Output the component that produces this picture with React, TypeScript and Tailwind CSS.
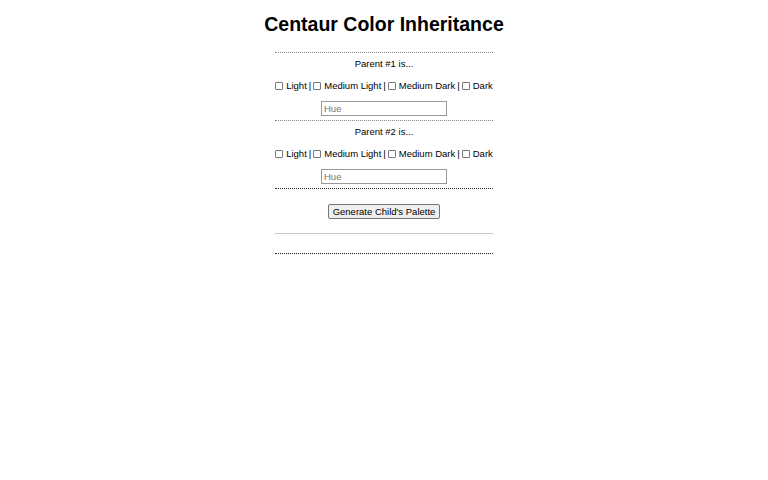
import { useState } from "react";

const tones = ["Light", "Medium Light", "Medium Dark", "Dark"];

function Divider({ tone = "mid" }: { tone?: "mid" | "dark" | "light" }) {
  const cls =
    tone === "dark"
      ? "border-t border-dotted border-[#222]"
      : tone === "light"
      ? "border-t border-[#c8c8c8]"
      : "border-t border-dotted border-[#888]";
  return <div className={`w-[218px] ${cls}`} />;
}

function ParentPicker({ n }: { n: number }) {
  const [picked, setPicked] = useState<string[]>([]);
  const toggle = (t: string) =>
    setPicked(picked.includes(t) ? picked.filter((p) => p !== t) : [...picked, t]);

  return (
    <div className="flex flex-col items-center">
      <p className="mt-[5px] text-[9.5px] leading-[12px]">Parent #{n} is...</p>
      <div className="mt-[10px] flex items-center text-[9.5px] leading-[12px] whitespace-nowrap">
        {tones.map((t, i) => (
          <span key={t} className="flex items-center">
            <input
              type="checkbox"
              checked={picked.includes(t)}
              onChange={() => toggle(t)}
              className="mr-[3px] h-[8px] w-[8px] appearance-none border border-[#777] rounded-[1px] bg-white"
            />
            {t}
            {i < tones.length - 1 && <span className="mx-[2px]">|</span>}
          </span>
        ))}
      </div>
      <input
        placeholder="Hue"
        className="mt-[9px] mb-[4px] h-[15px] w-[126px] border border-[#999] px-[2px] text-[9.5px] placeholder:text-[#777] outline-none"
      />
    </div>
  );
}

export default function App() {
  return (
    <div className="min-h-screen bg-white text-black font-['Liberation_Sans',Arial,sans-serif] flex flex-col items-center">
      <h1 className="mt-[12px] text-[19.5px] leading-[24px] font-bold">Centaur Color Inheritance</h1>
      <div className="mt-[16px]" />
      <Divider />
      <ParentPicker n={1} />
      <Divider />
      <ParentPicker n={2} />
      <Divider tone="dark" />
      <button className="mt-[15px] h-[15px] px-[4px] border border-[#767676] rounded-[2px] bg-[#efefef] text-[9.5px] leading-[12px]">
        Generate Child's Palette
      </button>
      <div className="mt-[14px]" />
      <Divider tone="light" />
      <div className="mt-[19px]" />
      <Divider tone="dark" />
    </div>
  );
}
